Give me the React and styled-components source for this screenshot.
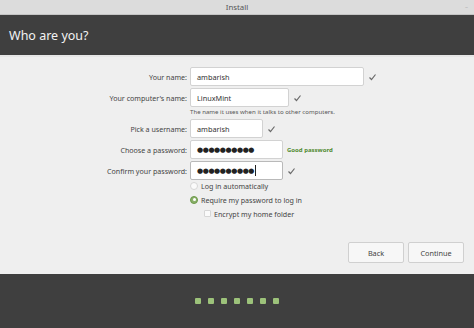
import React from 'react';
import styled, { createGlobalStyle } from 'styled-components';

const GlobalStyle = createGlobalStyle`
  body {
    margin: 0;
    font-family: "Noto Sans", "DejaVu Sans", sans-serif;
  }
`

const Window = styled.div`
  width: 474px;
  height: 328px;
  display: flex;
  flex-direction: column;
  overflow: hidden;
  background: #efefef;
`

const TitleBar = styled.div`
  height: 15px;
  background: #dcdcdc;
  border-bottom: 1px solid #c4c4c4;
  box-sizing: border-box;
  display: flex;
  align-items: center;
  justify-content: center;
  position: relative;
  font-size: 7.8px;
  color: #555;
`

const Minimize = styled.span`
  position: absolute;
  right: 6px;
  top: 3px;
  font-size: 6px;
  color: #aaa;
`

const Header = styled.div`
  height: 40px;
  background: #3f3f3f;
  color: #f2f2f2;
  display: flex;
  align-items: center;
  padding-left: 9px;
  font-size: 12.5px;
  border-bottom: 2px solid #e6e6e6;
`

const Content = styled.div`
  flex: 1;
  display: flex;
  flex-direction: column;
  padding-top: 10px;
`

const Form = styled.div`
  display: grid;
  grid-template-columns: 187px auto;
  column-gap: 3px;
  row-gap: 2px;
  align-items: center;
`

const Label = styled.div`
  text-align: right;
  font-size: 7.1px;
  color: #444;
`

const FieldCell = styled.div`
  display: flex;
  align-items: center;
  gap: 4px;
`

const Input = styled.div`
  width: ${p => p.$w}px;
  height: 19px;
  box-sizing: border-box;
  background: #fff;
  border: 1px solid ${p => (p.$focused ? '#b9b9b9' : '#d2d2d2')};
  border-radius: 2px;
  display: flex;
  align-items: center;
  padding-left: 6px;
  font-size: 7.3px;
  color: #333;
`

const Dots = styled.span`
  font-size: 7px;
  letter-spacing: -0.4px;
  color: #222;
`

const Caret = styled.span`
  display: inline-block;
  width: 1px;
  height: 11px;
  background: #222;
  margin-left: 1px;
`

const Hint = styled.div`
  font-size: 6.1px;
  line-height: 8px;
  color: #555;
  margin-top: -1px;
  margin-bottom: 1px;
`

const Strength = styled.span`
  font-size: 6px;
  font-weight: bold;
  color: #4f8a2f;
`

const Options = styled.div`
  display: flex;
  flex-direction: column;
  padding-left: 190px;
  gap: 3px;
`

const Option = styled.div`
  display: flex;
  align-items: center;
  gap: 3px;
  height: 11px;
  font-size: 7.1px;
  color: #444;
  padding-left: ${p => (p.$indent ? '14px' : '0')};
`

const Radio = styled.span`
  width: 8px;
  height: 8px;
  border-radius: 50%;
  box-sizing: border-box;
  background: ${p => (p.$on ? '#8ab06a' : '#fafafa')};
  border: 1px solid ${p => (p.$on ? '#6d9a4a' : '#d6d6d6')};
  display: flex;
  align-items: center;
  justify-content: center;
  &::after {
    content: '';
    width: 3px;
    height: 3px;
    border-radius: 50%;
    background: ${p => (p.$on ? '#fff' : 'transparent')};
  }
`

const Checkbox = styled.span`
  width: 7px;
  height: 7px;
  box-sizing: border-box;
  background: #fafafa;
  border: 1px solid #d6d6d6;
  border-radius: 1px;
`

const ButtonRow = styled.div`
  margin-top: auto;
  display: flex;
  justify-content: flex-end;
  gap: 4px;
  padding: 0 10px 11px 0;
`

const Button = styled.div`
  width: 56px;
  height: 21px;
  box-sizing: border-box;
  border: 1px solid #d0d0d0;
  border-radius: 2px;
  background: #f7f7f7;
  display: flex;
  align-items: center;
  justify-content: center;
  font-size: 7.3px;
  color: #444;
`

const Footer = styled.div`
  height: 54px;
  background: #3f3f3f;
  display: flex;
  justify-content: center;
  align-items: center;
  gap: 7px;
  padding-right: 1px;
`

const Dot = styled.span`
  width: 6px;
  height: 6px;
  border-radius: 1px;
  background: #9cc27a;
`

const Check = () => (
  <svg width="9" height="8" viewBox="0 0 9 8">
    <path d="M1.5 4.5 L3.5 6.5 L7.5 1.5" fill="none" stroke="#6a6a6a" strokeWidth="1.2" />
  </svg>
)

export default function App() {
  return (
    <Window>
      <GlobalStyle />
      <TitleBar>
        Install
        <Minimize>–</Minimize>
      </TitleBar>
      <Header>Who are you?</Header>
      <Content>
        <Form>
          <Label>Your name:</Label>
          <FieldCell>
            <Input $w={174}>ambarish</Input>
            <Check />
          </FieldCell>

          <Label>Your computer's name:</Label>
          <FieldCell>
            <Input $w={99}>LinuxMint</Input>
            <Check />
          </FieldCell>

          <div />
          <Hint>The name it uses when it talks to other computers.</Hint>

          <Label>Pick a username:</Label>
          <FieldCell>
            <Input $w={73}>ambarish</Input>
            <Check />
          </FieldCell>

          <Label>Choose a password:</Label>
          <FieldCell>
            <Input $w={93}><Dots>●●●●●●●●●●</Dots></Input>
            <Strength>Good password</Strength>
          </FieldCell>

          <Label>Confirm your password:</Label>
          <FieldCell>
            <Input $w={93} $focused><Dots>●●●●●●●●●●</Dots><Caret /></Input>
            <Check />
          </FieldCell>
        </Form>

        <Options>
          <Option><Radio />Log in automatically</Option>
          <Option><Radio $on />Require my password to log in</Option>
          <Option $indent><Checkbox />Encrypt my home folder</Option>
        </Options>

        <ButtonRow>
          <Button>Back</Button>
          <Button>Continue</Button>
        </ButtonRow>
      </Content>
      <Footer>
        {[0, 1, 2, 3, 4, 5, 6].map(i => <Dot key={i} />)}
      </Footer>
    </Window>
  );
}
